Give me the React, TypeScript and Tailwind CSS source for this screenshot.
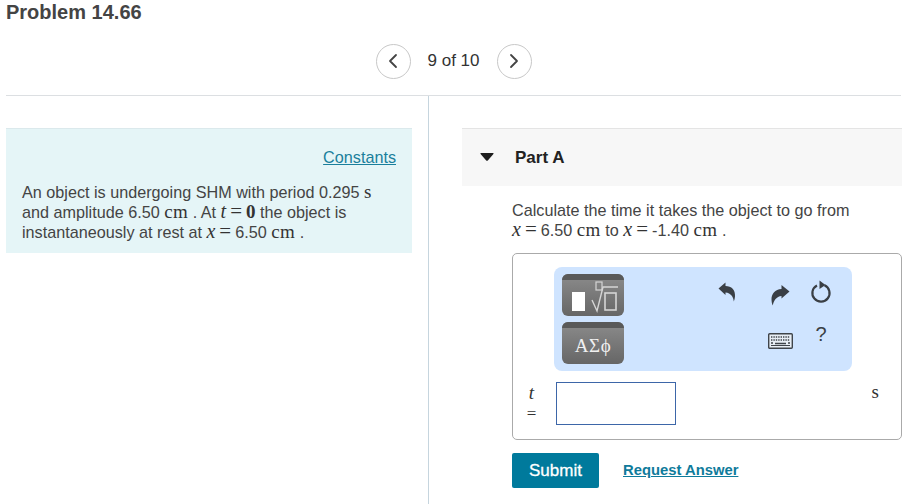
import { ChevronLeft, ChevronRight } from "lucide-react";

const sans = "font-['Liberation_Sans',Arial,sans-serif]";

function MI({ children }: { children: string }) {
  return <i className="font-['Liberation_Serif',serif] text-[20px] leading-[0] text-[#333]">{children}</i>;
}

function MR({ children }: { children: string }) {
  return <span className="font-['Liberation_Serif',serif] text-[19px] leading-[0] tracking-[0.4px] text-[#333]">{children}</span>;
}

function Eq() {
  return <span className="font-['Liberation_Serif',serif] text-[21px] leading-[0] mx-[4px] text-[#333]">=</span>;
}

function PagerButton({ right }: { right?: boolean }) {
  return (
    <button className="w-[35px] h-[35px] rounded-full border border-[#c8c8c8] flex items-center justify-center bg-white text-[#444]">
      {right ? <ChevronRight size={24} strokeWidth={1.8} /> : <ChevronLeft size={24} strokeWidth={1.8} />}
    </button>
  );
}

function MathButton({ children }: { children: React.ReactNode }) {
  return (
    <div className="w-[62px] h-[42px] rounded-[6px] overflow-hidden flex flex-col bg-gradient-to-b from-[#8c8c8c] to-[#666666]">
      <div className="h-[6px] bg-[#595959] shrink-0"></div>
      <div className="flex-1 flex items-center justify-center">{children}</div>
    </div>
  );
}

function TemplatesIcon() {
  return (
    <svg width="54" height="34" viewBox="0 0 54 34" fill="none">
      <rect x="6" y="11" width="13" height="19" fill="#ffffff" />
      <rect x="30" y="1" width="6" height="8" stroke="#d5d5d5" strokeWidth="1.2" />
      <path d="M26 19 L31 30 L37 6 H52" stroke="#d5d5d5" strokeWidth="1.4" />
      <rect x="39" y="12" width="11" height="17" stroke="#d5d5d5" strokeWidth="1.6" />
    </svg>
  );
}

function UndoIcon() {
  return (
    <svg width="18" height="20" viewBox="0 0 18 20">
      <path d="M0.5 6.5 L7.5 0.5 V4 C13.5 4 17.5 8 17 14.5 C16.8 16.5 16.4 18 15.8 19.5 C15.4 15 13 11 7.5 10.5 V13 Z" fill="#3a3f45" />
    </svg>
  );
}

function RedoIcon() {
  return (
    <svg width="19" height="22" viewBox="0 0 19 22">
      <path d="M18.5 7.5 L10.5 1 V5 C4 5.5 0.5 10 0.5 15 C0.5 17.5 1 20 1.8 21.5 C2.6 16.5 5.5 12.5 10.5 12 V14.5 Z" fill="#3a3f45" />
    </svg>
  );
}

function ResetIcon() {
  return (
    <svg width="22" height="24" viewBox="0 0 22 24" fill="none">
      <path d="M14.5 5.2 A8.6 8.6 0 1 1 7 5.4" stroke="#3a3f45" strokeWidth="2.2" />
      <path d="M9.5 0.5 L15.5 5 L9.5 9 Z" fill="#3a3f45" />
    </svg>
  );
}

function KeyboardIcon() {
  return (
    <svg width="25" height="16" viewBox="0 0 25 16" fill="none">
      <rect x="0.7" y="0.7" width="23.6" height="14.6" rx="1" fill="#e8eef5" stroke="#3f444a" strokeWidth="1.4" />
      <path d="M3 4 H22 M3 7 H22" stroke="#3f444a" strokeWidth="1.4" strokeDasharray="1.4 1" />
      <path d="M3 10 H5 M7 10.5 H18 M20 10 H22" stroke="#3f444a" strokeWidth="1.6" />
      <path d="M3 12.5 H22" stroke="#3f444a" strokeWidth="1" />
    </svg>
  );
}

export default function App() {
  return (
    <div className={`${sans} w-[905px] h-[504px] overflow-hidden bg-white text-[#444]`}>
      <h1 className="pl-[6px] h-[25px] text-[20px] leading-[24px] font-bold text-[#444]">Problem 14.66</h1>

      <div className="mx-[6px] w-[895px] h-[71px] border-b border-[#dcdfe2] flex items-center justify-center pt-[2px] gap-[17px]">
        <PagerButton />
        <span className="text-[17px] text-[#333]">9 of 10</span>
        <PagerButton right />
      </div>

      <div className="flex h-[408px]">
        <div className="w-[428px] shrink-0 pl-[6px] pt-[32px]">
          <div className="w-[406px] h-[125px] bg-[#e5f5f7] border-t border-[#dbe9ec] pl-[16px] pr-[16px] pt-[17px]">
            <div className="text-right">
              <a className="text-[16.2px] leading-[20px] text-[#1a7f9c] underline">Constants</a>
            </div>
            <p className="mt-[12px] text-[16.2px] leading-[20px] text-[#444]">
              An object is undergoing SHM with period 0.295 <MR>s</MR>
              <br />
              and amplitude 6.50 <MR>cm</MR> . At <MI>t</MI><Eq /><b className="font-['Liberation_Serif',serif] text-[19px] leading-[0] text-[#333]">0</b> the object is
              <br />
              instantaneously at rest at <MI>x</MI><Eq />6.50 <MR>cm</MR> .
            </p>
          </div>
        </div>

        <div className="flex-1 border-l border-[#c6d5de] pl-[33px] pt-[32px]">
          <div className="w-[440px] h-[58px] bg-[#f7f7f7] border-t border-[#e4e4e4] flex items-center">
            <svg width="14" height="8" viewBox="0 0 14 8" className="ml-[18px] mt-[-2px]">
              <path d="M1 0 H13 Q14 0 13.4 1 L7.8 7.5 Q7 8 6.2 7.5 L0.6 1 Q0 0 1 0 Z" fill="#1e1e1e" />
            </svg>
            <span className="ml-[21px] text-[17px] font-bold text-[#222]">Part A</span>
          </div>

          <div className="pl-[50px] w-[440px]">
            <p className="mt-[14px] text-[16.2px] leading-[20px] text-[#444]">
              Calculate the time it takes the object to go from
              <br />
              <MI>x</MI><Eq />6.50 <MR>cm</MR> to <MI>x</MI><Eq />-1.40 <MR>cm</MR> .
            </p>

            <div className="mt-[13px] w-[390px] h-[187px] border border-[#aaaaaa] rounded-[5px] pt-[13px]">
              <div className="ml-[41px] w-[298px] h-[104px] bg-[#cfe4ff] rounded-[8px] flex pl-[8px] pt-[7px]">
                <div className="flex flex-col gap-[6px]">
                  <MathButton><TemplatesIcon /></MathButton>
                  <MathButton>
                    <span className="font-['Liberation_Serif',serif] text-[19px] text-[#f0f0f0] tracking-[0.5px]">ΑΣϕ</span>
                  </MathButton>
                </div>
                <div className="ml-[76px] grid grid-cols-[54px_52px_30px] grid-rows-[36px_48px] justify-items-center items-center">
                  <UndoIcon />
                  <div className="mt-[5px]"><RedoIcon /></div>
                  <ResetIcon />
                  <div></div>
                  <div className="mt-[14px]"><KeyboardIcon /></div>
                  <span className="text-[20px] text-[#3a3f45]">?</span>
                </div>
              </div>

              <div className="mt-[11px] flex items-start">
                <div className="w-[37px] flex flex-col items-center">
                  <span className="font-['Liberation_Serif',serif] italic text-[19px] leading-[20px] text-[#333] mt-[1px]">t</span>
                  <span className="font-['Liberation_Serif',serif] text-[17px] leading-[20px] text-[#333] mt-[1px]">=</span>
                </div>
                <div className="ml-[6px] w-[120px] h-[43px] border border-[#3d66a8] bg-white"></div>
                <span className="ml-auto mr-[22px] font-['Liberation_Serif',serif] text-[19px] leading-[20px] text-[#333]">s</span>
              </div>
            </div>

            <div className="mt-[13px] flex items-center">
              <button className="w-[87px] h-[35px] bg-[#007a9c] rounded-[2px] text-white text-[17px] [-webkit-text-stroke:0.3px_white]">Submit</button>
              <a className="ml-[24px] text-[14.8px] font-bold text-[#0f7b9b] underline">Request Answer</a>
            </div>
          </div>
        </div>
      </div>
    </div>
  );
}
